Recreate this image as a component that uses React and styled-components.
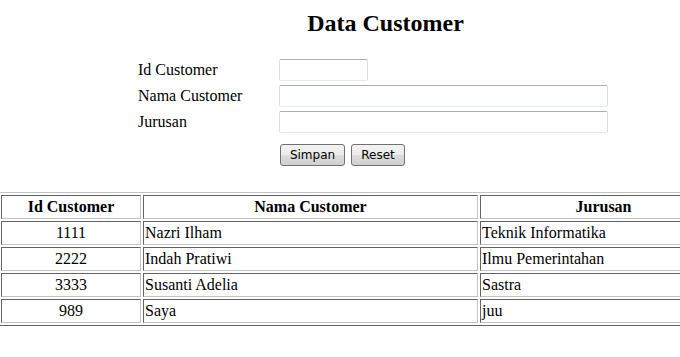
import React from "react";
import styled, { createGlobalStyle } from "styled-components";

const light = "#c3c3c3";
const dark = "#646464";

const GlobalStyle = createGlobalStyle`
  html, body {
    margin: 0;
    padding: 0;
    overflow: hidden;
    background: #ffffff;
  }
  body {
    font-family: "Liberation Serif", "Times New Roman", serif;
    font-size: 16px;
    color: #000000;
  }
`;

const Page = styled.div`
  width: 771px;
  padding-top: 9px;
`;

const Title = styled.h2`
  margin: 0;
  font-size: 24px;
  font-weight: bold;
  text-align: center;
  line-height: 28px;
`;

const Form = styled.form`
  margin-top: 22px;
  padding-left: 138px;
`;

const Fields = styled.div`
  display: grid;
  grid-template-columns: 141px auto;
  grid-auto-rows: 22px;
  row-gap: 4px;
  align-items: center;
`;

const Label = styled.label`
  line-height: 22px;
`;

const Input = styled.input`
  box-sizing: border-box;
  width: ${(p) => p.$width}px;
  height: 22px;
  margin: 0;
  padding: 1px 3px;
  border: 1px solid #dbdfe6;
  border-top-color: #abadb3;
  border-bottom-color: #e3e9ef;
  border-radius: 2px;
  font-family: "Liberation Sans", Arial, sans-serif;
  font-size: 13px;
  background: #ffffff;
`;

const Actions = styled.div`
  display: flex;
  gap: 6px;
  margin-top: 11px;
  padding-left: 142px;
`;

const Button = styled.button`
  box-sizing: border-box;
  width: ${(p) => p.$width}px;
  height: 22px;
  margin: 0;
  padding: 0;
  border: 1px solid #707070;
  border-radius: 3px;
  background: linear-gradient(#f2f2f2 0%, #ebebeb 50%, #dddddd 50%, #cfcfcf 100%);
  font-family: "DejaVu Sans", Tahoma, sans-serif;
  font-size: 12px;
  color: #000000;
`;

const Table = styled.table`
  margin: 26px 0 0 -2px;
  width: 732px;
  table-layout: fixed;
  border-collapse: separate;
  border-spacing: 2px;
  border: 1px solid;
  border-color: ${light} ${dark} ${dark} ${light};
`;

const Th = styled.th`
  height: 20px;
  padding: 1px;
  line-height: 20px;
  font-weight: bold;
  text-align: center;
  border: 1px solid;
  border-color: ${dark} ${light} ${light} ${dark};
  white-space: nowrap;
`;

const Td = styled.td`
  height: 20px;
  padding: 1px;
  line-height: 20px;
  text-align: ${(p) => (p.$center ? "center" : "left")};
  border: 1px solid;
  border-color: ${dark} ${light} ${light} ${dark};
  white-space: nowrap;
`;

const customers = [
  { id: "1111", nama: "Nazri Ilham", jurusan: "Teknik Informatika" },
  { id: "2222", nama: "Indah Pratiwi", jurusan: "Ilmu Pemerintahan" },
  { id: "3333", nama: "Susanti Adelia", jurusan: "Sastra" },
  { id: "989", nama: "Saya", jurusan: "juu" },
];

export default function App() {
  return (
    <Page>
      <GlobalStyle />
      <Title>Data Customer</Title>
      <Form onSubmit={(e) => e.preventDefault()}>
        <Fields>
          <Label>Id Customer</Label>
          <div>
            <Input $width={89} />
          </div>
          <Label>Nama Customer</Label>
          <div>
            <Input $width={329} />
          </div>
          <Label>Jurusan</Label>
          <div>
            <Input $width={329} />
          </div>
        </Fields>
        <Actions>
          <Button type="submit" $width={65}>
            Simpan
          </Button>
          <Button type="reset" $width={54}>
            Reset
          </Button>
        </Actions>
      </Form>
      <Table>
        <colgroup>
          <col style={{ width: 140 }} />
          <col style={{ width: 335 }} />
          <col />
        </colgroup>
        <thead>
          <tr>
            <Th>Id Customer</Th>
            <Th>Nama Customer</Th>
            <Th>Jurusan</Th>
          </tr>
        </thead>
        <tbody>
          {customers.map((c) => (
            <tr key={c.id}>
              <Td $center>{c.id}</Td>
              <Td>{c.nama}</Td>
              <Td>{c.jurusan}</Td>
            </tr>
          ))}
        </tbody>
      </Table>
    </Page>
  );
}
